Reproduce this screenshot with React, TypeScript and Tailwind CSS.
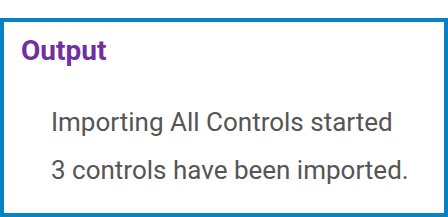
import React from 'react';

const lines = ['Importing All Controls started', '3 controls have been imported.'];

export default function App() {
    return (
        <div className="w-[448px] h-[217px] bg-white pt-[18px]" style={{ fontFamily: 'Roboto, "Liberation Sans", sans-serif' }}>
            <div className="h-[199px] border-4 border-[#0682c6] px-[17px] pt-[14px]">
                <h2 className="text-[28px] leading-[30px] font-bold text-[#7030a0]">Output</h2>
                <div className="pl-[30px] pt-[41px] text-[#555555] text-[26px] leading-[30px] space-y-[18px]">
                    {lines.map(l => (
                        <p key={l}>{l}</p>
                    ))}
                </div>
            </div>
        </div>
    );
}
